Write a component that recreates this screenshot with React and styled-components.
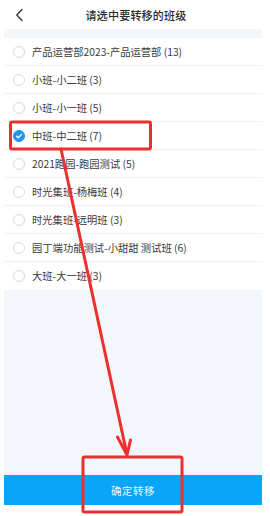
import React from "react";
import styled, { createGlobalStyle } from "styled-components";

const Global = createGlobalStyle`
  html, body { margin: 0; padding: 0; background: #fff; }
  body { font-family: "Noto Sans CJK SC", "Noto Sans", sans-serif; }
  * { box-sizing: border-box; }
`;

const Page = styled.div`
  position: relative;
  width: 270px;
  height: 516px;
  background: #fff;
  display: flex;
  flex-direction: column;
  overflow: hidden;
`;

const Header = styled.div`
  height: 29px;
  flex: none;
  display: flex;
  align-items: center;
  justify-content: center;
  position: relative;
`;

const Back = styled.div`
  position: absolute;
  left: 14px;
  top: 8px;
  width: 12px;
  height: 14px;
  display: flex;
`;

const Title = styled.div`
  font-size: 11px;
  font-weight: 500;
  color: #2a2a2a;
  letter-spacing: 0.2px;
  margin-left: 2px;
`;

const Frame = styled.div`
  flex: 1;
  margin: 0 8px 11px 4px;
  background: #f3f7fb;
  display: flex;
  flex-direction: column;
`;

const TopStrip = styled.div`
  height: 9px;
  flex: none;
`;

const List = styled.div`
  background: #fff;
  display: flex;
  flex-direction: column;
`;

const Row = styled.div`
  height: 28px;
  display: flex;
  align-items: center;
  padding-left: 9px;
  gap: 7px;
  border-bottom: 1px solid ${(p) => (p.$last ? "transparent" : "#f0f1f3")};
`;

const Radio = styled.div`
  width: 12px;
  height: 12px;
  border-radius: 50%;
  flex: none;
  border: 1px solid ${(p) => (p.$on ? "#1e96ee" : "#d6d9dd")};
  background: ${(p) => (p.$on ? "#1e96ee" : "#fff")};
  display: flex;
  align-items: center;
  justify-content: center;
`;

const Label = styled.span`
  font-size: 10.3px;
  color: #3a3a3a;
  white-space: nowrap;
`;

const Spacer = styled.div`
  flex: 1;
`;

const Confirm = styled.div`
  height: 30px;
  flex: none;
  background: #09a6f7;
  color: #e9f6ff;
  font-size: 10.5px;
  display: flex;
  align-items: center;
  justify-content: center;
  letter-spacing: 0.5px;
`;

const Overlay = styled.svg`
  position: absolute;
  left: 0;
  top: 0;
  pointer-events: none;
`;

const items = [
  "产品运营部2023-产品运营部 (13)",
  "小班-小二班 (3)",
  "小班-小一班 (5)",
  "中班-中二班 (7)",
  "2021跑园-跑园测试 (5)",
  "时光集班-杨梅班 (4)",
  "时光集班-远明班 (3)",
  "园丁端功能测试-小甜甜 测试班 (6)",
  "大班-大一班 (3)",
];

export default function App() {
  return (
    <>
      <Global />
      <Page>
        <Header>
          <Back>
            <svg width="12" height="14" viewBox="0 0 12 14">
              <path d="M8 1.5 L2.8 7 L8 12.5" fill="none" stroke="#333" strokeWidth="1.3" strokeLinecap="round" strokeLinejoin="round" />
            </svg>
          </Back>
          <Title>请选中要转移的班级</Title>
        </Header>
        <Frame>
          <TopStrip />
          <List>
            {items.map((t, i) => (
              <Row key={t} $last={i === items.length - 1}>
                <Radio $on={i === 3}>
                  {i === 3 && (
                    <svg width="8" height="8" viewBox="0 0 8 8">
                      <path d="M1.5 4.2 L3.3 5.8 L6.5 2.4" fill="none" stroke="#fff" strokeWidth="1.3" strokeLinecap="round" strokeLinejoin="round" />
                    </svg>
                  )}
                </Radio>
                <Label>{t}</Label>
              </Row>
            ))}
          </List>
          <Spacer />
          <Confirm>确定转移</Confirm>
        </Frame>
        <Overlay width="270" height="516" viewBox="0 0 270 516">
          <rect x="10.5" y="122" width="140" height="27" rx="1.5" fill="none" stroke="#ec2f2f" strokeWidth="3" />
          <rect x="83" y="457" width="99" height="55" rx="1.5" fill="none" stroke="#ec2f2f" strokeWidth="3" />
          <line x1="61" y1="149" x2="126" y2="450" stroke="#ec2f2f" strokeWidth="3" strokeLinecap="round" />
          <path d="M117.5 437 L127 455 L130.5 440" fill="none" stroke="#ec2f2f" strokeWidth="3" strokeLinecap="round" strokeLinejoin="round" />
        </Overlay>
      </Page>
    </>
  );
}
